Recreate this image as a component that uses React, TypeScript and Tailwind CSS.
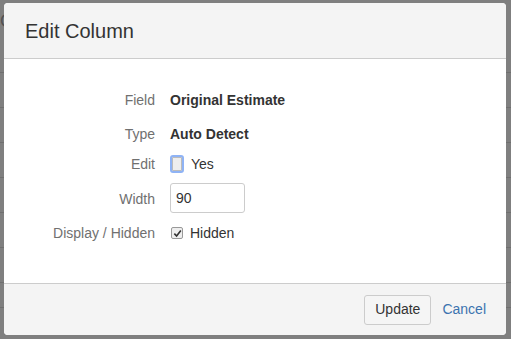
export default function App() {
  const rows = [72, 107, 142, 177, 212, 247, 282, 307];
  return (
    <div className="relative h-[339px] w-[511px] overflow-hidden bg-[#7f7f7f] font-['Liberation_Sans',Arial,sans-serif] text-[14px] text-[#333]">
      {/* page behind the overlay */}
      {rows.map((y) => (
        <div key={y} className="absolute left-0 right-0 h-px bg-[#6f6f6f]" style={{ top: y }} />
      ))}
      <div className="absolute left-0 top-[8px] text-[18px] text-[#333] opacity-60">G</div>

      <div className="absolute left-[4px] top-[3px] flex h-[332px] w-[502px] flex-col overflow-hidden rounded-[4px] bg-white">
        <div className="flex h-[56px] items-center border-b border-[#ccc] bg-[#f4f4f4] px-[21px]">
          <h1 className="text-[20px] text-[#333]">Edit Column</h1>
        </div>

        <div className="flex-1 pt-[27px]">
          <div className="grid grid-cols-[151px_1fr] items-center gap-x-[15px]">
            <div className="h-[28px] text-right leading-[28px] text-[#707070]">Field</div>
            <div className="h-[28px] font-bold leading-[28px]">Original Estimate</div>

            <div className="mt-[6px] h-[28px] text-right leading-[28px] text-[#707070]">Type</div>
            <div className="mt-[6px] h-[28px] font-bold leading-[28px]">Auto Detect</div>

            <div className="mt-[2px] h-[28px] text-right leading-[28px] text-[#707070]">Edit</div>
            <label className="mt-[2px] flex h-[28px] items-center gap-[7px]">
              <span className="block h-[18px] w-[14px] rounded-[3px] border-2 border-[#8fb3f5] bg-[#eee] shadow-[inset_0_0_0_1px_#bbb]" />
              <span>Yes</span>
            </label>

            <div className="mt-[5px] h-[32px] text-right leading-[32px] text-[#707070]">Width</div>
            <div className="mt-[5px] h-[32px]">
              <div className="flex h-[30px] w-[75px] items-center rounded-[3px] border border-[#ccc] bg-white px-[5px] text-[14px]">
                90
              </div>
            </div>

            <div className="mt-[4px] h-[28px] text-right leading-[28px] text-[#707070]">Display / Hidden</div>
            <label className="mt-[4px] flex h-[28px] items-center gap-[7px]">
              <span className="ml-px flex h-[12px] w-[12px] items-center justify-center rounded-[2px] border border-[#999] bg-[#eee]">
                <svg viewBox="0 0 10 10" className="h-[9px] w-[9px]">
                  <path d="M1.5 5.2 L4 7.8 L8.7 1.8" fill="none" stroke="#333" strokeWidth="1.8" />
                </svg>
              </span>
              <span>Hidden</span>
            </label>
          </div>
        </div>

        <div className="flex h-[52px] items-center justify-end gap-[11px] border-t border-[#ccc] bg-[#f4f4f4] pr-[20px]">
          <button className="h-[30px] rounded-[3px] border border-[#ccc] bg-[#f5f5f5] px-[10px] text-[14px] text-[#333]">
            Update
          </button>
          <a className="text-[14px] text-[#3b73af]">Cancel</a>
        </div>
      </div>
    </div>
  );
}
